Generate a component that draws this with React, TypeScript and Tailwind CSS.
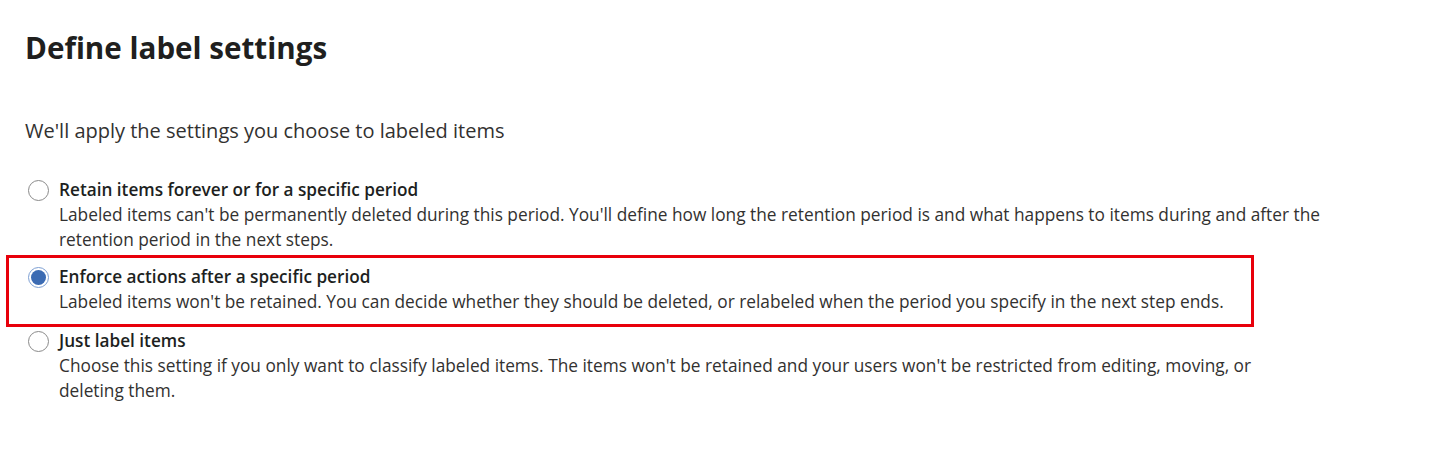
const FONT = "font-['Open_Sans',sans-serif]";

type Option = {
  id: string;
  title: string;
  description: string;
  // text column width, set per option so the wraps land where the source puts them
  widthClass: string;
};

const OPTIONS: Option[] = [
  {
    id: "retain",
    title: "Retain items forever or for a specific period",
    description:
      "Labeled items can't be permanently deleted during this period. You'll define how long the retention period is and what happens to items during and after the retention period in the next steps.",
    widthClass: "w-[1274px]",
  },
  {
    id: "enforce",
    title: "Enforce actions after a specific period",
    description:
      "Labeled items won't be retained. You can decide whether they should be deleted, or relabeled when the period you specify in the next step ends.",
    widthClass: "w-[1170px]",
  },
  {
    id: "label",
    title: "Just label items",
    description:
      "Choose this setting if you only want to classify labeled items. The items won't be retained and your users won't be restricted from editing, moving, or deleting them.",
    widthClass: "w-[1220px]",
  },
];

function Radio({ checked }: { checked: boolean }) {
  if (checked) {
    return (
      <span className="mt-[2px] flex h-[21px] w-[21px] shrink-0 items-center justify-center rounded-full border border-[#7d9fd3] bg-white">
        <span className="h-[15px] w-[15px] rounded-full bg-[#3b6bb3]" />
      </span>
    );
  }
  return (
    <span className="mt-[2px] h-[21px] w-[21px] shrink-0 rounded-full border border-[#8a8a8a] bg-white" />
  );
}

function RadioRow({ option, checked }: { option: Option; checked: boolean }) {
  return (
    <label className="flex items-start gap-[10px] pl-[3px]">
      <Radio checked={checked} />
      <span className={`flex flex-col ${option.widthClass}`}>
        <span className="text-[17.2px] leading-[24px] font-semibold text-[#201f1e]">
          {option.title}
        </span>
        <span className="text-[17.3px] leading-[25px] text-[#323130]">{option.description}</span>
      </span>
    </label>
  );
}

export default function App() {
  const selected = "enforce";
  return (
    <div className={`${FONT} min-h-[459px] w-[1440px] bg-white px-[25px] pt-[28px]`}>
      <h1 className="text-[29.6px] leading-[40px] font-bold text-[#201f1e]">Define label settings</h1>

      <p className="mt-[50px] text-[20px] leading-[26px] text-[#323130]">
        We'll apply the settings you choose to labeled items
      </p>

      <div className="mt-[34px] flex flex-col">
        <RadioRow option={OPTIONS[0]} checked={false} />

        {/* highlight box around the chosen option */}
        <div className="mt-[3px] -ml-[19px] w-[1248px] border-[3px] border-[#e8000b] pt-[7px] pb-[10px] pl-[16px]">
          <RadioRow option={OPTIONS[1]} checked={selected === "enforce"} />
        </div>

        <div className="mt-[2px]">
          <RadioRow option={OPTIONS[2]} checked={false} />
        </div>
      </div>
    </div>
  );
}
